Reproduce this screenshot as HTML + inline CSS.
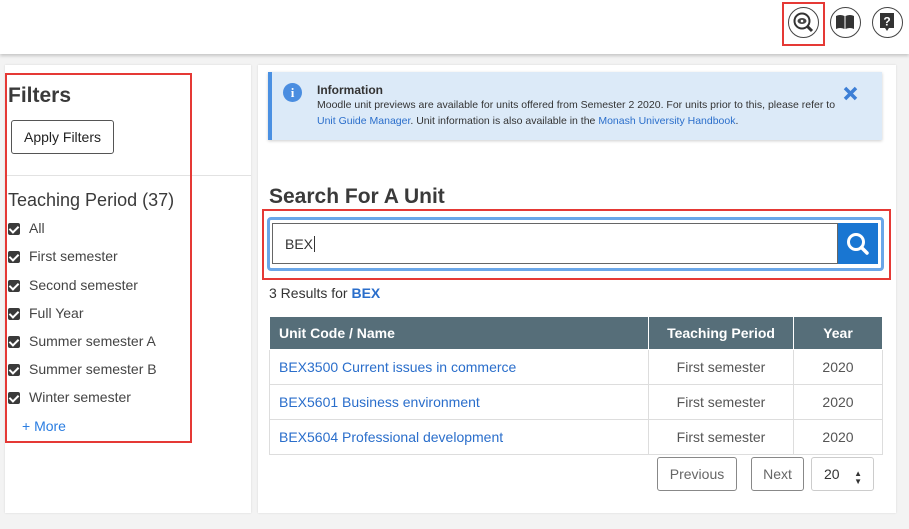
<!DOCTYPE html>
<html><head><style>
body{margin:0;width:909px;height:529px;background:#f3f3f3;font-family:"Liberation Sans",sans-serif;color:#333;position:relative;overflow:hidden}
.a{position:absolute}
.top{left:0;top:0;width:909px;height:54px;background:#fff;box-shadow:0 2px 3px rgba(0,0,0,.18)}
.circ{width:31px;height:31px;border:1.5px solid #444;border-radius:50%;box-sizing:border-box;top:7px}
a{color:#2a6ecb;text-decoration:none}
.lp{left:5px;top:65px;width:246px;height:448px;background:#fff;box-shadow:0 0 2px rgba(0,0,0,.12)}
.mp{left:258px;top:65px;width:638px;height:448px;background:#fff;box-shadow:0 0 2px rgba(0,0,0,.12)}
.cb{left:8px;width:12px;height:12px;background:#3a3a3a;border-radius:2px}
.cb:after{content:"";position:absolute;left:3px;top:1px;width:4px;height:7px;border:solid #fff;border-width:0 2px 2px 0;transform:rotate(45deg)}
.li{left:29px;font-size:14px;color:#444}
table{border-collapse:collapse;font-size:14px}
td,th{border:1px solid #ddd;padding:0 9px}
td{height:34px}
th{height:32px;background:#566e79;color:#fff;border-color:#fff;text-align:left}
td.c{text-align:center;color:#555}
.btn{border:1px solid #888;border-radius:3px;font-size:14px;color:#666;text-align:center;line-height:32px;box-sizing:border-box;height:34px}
</style></head><body>
<div class="a top"></div>
<div class="a circ" style="left:788px"><svg width="28" height="28" class="a" style="left:0;top:0"><circle cx="13" cy="13" r="7.5" fill="none" stroke="#333" stroke-width="2"/><line x1="18" y1="18" x2="23" y2="23" stroke="#333" stroke-width="3"/><ellipse cx="13" cy="13" rx="4.5" ry="3" fill="#444"/><circle cx="13" cy="13" r="1.3" fill="#fff"/></svg></div>
<div class="a" style="left:782px;top:2px;width:43px;height:44px;border:2px solid #e53935;box-sizing:border-box"></div>
<div class="a circ" style="left:830px"><svg width="28" height="28" class="a" style="left:0;top:0"><path d="M5 8 Q9 6 13.5 8 V21 Q9 19 5 21Z M14.5 8 Q19 6 23 8 V21 Q19 19 14.5 21Z" fill="#333"/></svg></div>
<div class="a circ" style="left:872px"><svg width="28" height="28" class="a" style="left:0;top:0"><path d="M7 5 H21 V20 H16 L14 23 L12 20 H7Z" fill="#333"/><text x="14" y="17.5" font-size="12" font-weight="bold" fill="#fff" text-anchor="middle" font-family="Liberation Sans">?</text></svg></div>

<div class="a lp"></div>
<div class="a" style="left:8px;top:84px;font-size:21px;font-weight:bold;color:#3a3a3a">Filters</div>
<div class="a btn" style="left:11px;top:120px;width:103px;color:#222;border-color:#555">Apply Filters</div>
<div class="a" style="left:5px;top:175px;width:246px;height:1px;background:#e2e2e2"></div>
<div class="a" style="left:8px;top:190px;font-size:18px;color:#3a3a3a">Teaching Period (37)</div>
<div class="a cb" style="top:223px"></div><div class="a li" style="top:220px">All</div>
<div class="a cb" style="top:251px"></div><div class="a li" style="top:248px">First semester</div>
<div class="a cb" style="top:280px"></div><div class="a li" style="top:277px">Second semester</div>
<div class="a cb" style="top:308px"></div><div class="a li" style="top:305px">Full Year</div>
<div class="a cb" style="top:336px"></div><div class="a li" style="top:333px">Summer semester A</div>
<div class="a cb" style="top:364px"></div><div class="a li" style="top:361px">Summer semester B</div>
<div class="a cb" style="top:392px"></div><div class="a li" style="top:389px">Winter semester</div>
<div class="a" style="left:22px;top:418px;font-size:14px;color:#2a7de1">+ More</div>
<div class="a" style="left:5px;top:73px;width:187px;height:370px;border:2px solid #e53935;box-sizing:border-box"></div>

<div class="a mp"></div>
<div class="a" style="left:268px;top:72px;width:614px;height:68px;background:#dceaf8;border-left:4px solid #4a90e2;box-sizing:border-box;box-shadow:0 1px 3px rgba(0,0,0,.2)"></div>
<div class="a" style="left:283px;top:83px;width:19px;height:19px;border-radius:50%;background:#4a8de0;color:#fff;font-size:13px;font-weight:bold;text-align:center;line-height:19px;font-family:'Liberation Serif',serif">i</div>
<div class="a" style="left:317px;top:83px;font-size:12px;font-weight:bold;color:#333">Information</div>
<div class="a" style="left:317px;top:97px;font-size:10.5px;line-height:16px;color:#333;width:530px">Moodle unit previews are available for units offered from Semester 2 2020. For units prior to this, please refer to <a>Unit Guide Manager</a>. Unit information is also available in the <a>Monash University Handbook</a>.</div>
<svg class="a" style="left:843px;top:86px" width="15" height="15"><path d="M2 2L13 13M13 2L2 13" stroke="#3d7fd6" stroke-width="3.5"/></svg>

<div class="a" style="left:269px;top:185px;font-size:21px;font-weight:bold;color:#3a3a3a">Search For A Unit</div>
<div class="a" style="left:262px;top:209px;width:629px;height:71px;border:2px solid #e53935;box-sizing:border-box"></div>
<div class="a" style="left:267px;top:217px;width:617px;height:54px;border:3px solid #6aa6e8;border-radius:4px;box-sizing:border-box"></div>
<div class="a" style="left:272px;top:223px;width:566px;height:41px;border:1px solid #666;box-sizing:border-box;font-size:14px;line-height:40px;padding-left:12px;color:#333">BEX<span style="border-left:1px solid #333;margin-left:1px"></span></div>
<div class="a" style="left:838px;top:223px;width:40px;height:41px;background:#1976d2"><svg width="40" height="41"><circle cx="18" cy="19" r="7.5" fill="none" stroke="#fff" stroke-width="3"/><line x1="23.5" y1="24.5" x2="29" y2="30" stroke="#fff" stroke-width="3.5" stroke-linecap="round"/></svg></div>

<div class="a" style="left:269px;top:285px;font-size:14px;color:#333">3 Results for <a style="font-weight:bold">BEX</a></div>
<table class="a" style="left:269px;top:316px;width:614px">
<tr><th style="width:360px">Unit Code / Name</th><th style="text-align:center;width:126px">Teaching Period</th><th style="text-align:center">Year</th></tr>
<tr><td><a>BEX3500 Current issues in commerce</a></td><td class="c">First semester</td><td class="c">2020</td></tr>
<tr><td><a>BEX5601 Business environment</a></td><td class="c">First semester</td><td class="c">2020</td></tr>
<tr><td><a>BEX5604 Professional development</a></td><td class="c">First semester</td><td class="c">2020</td></tr>
</table>
<div class="a btn" style="left:657px;top:457px;width:80px">Previous</div>
<div class="a btn" style="left:751px;top:457px;width:53px">Next</div>
<div class="a btn" style="left:811px;top:457px;width:63px;border-color:#ccc;color:#333;text-align:left;padding-left:12px">20<span style="position:absolute;right:11px;top:0;font-size:8px;line-height:8px;top:12px">▲<br>▼</span></div>
</body></html>
